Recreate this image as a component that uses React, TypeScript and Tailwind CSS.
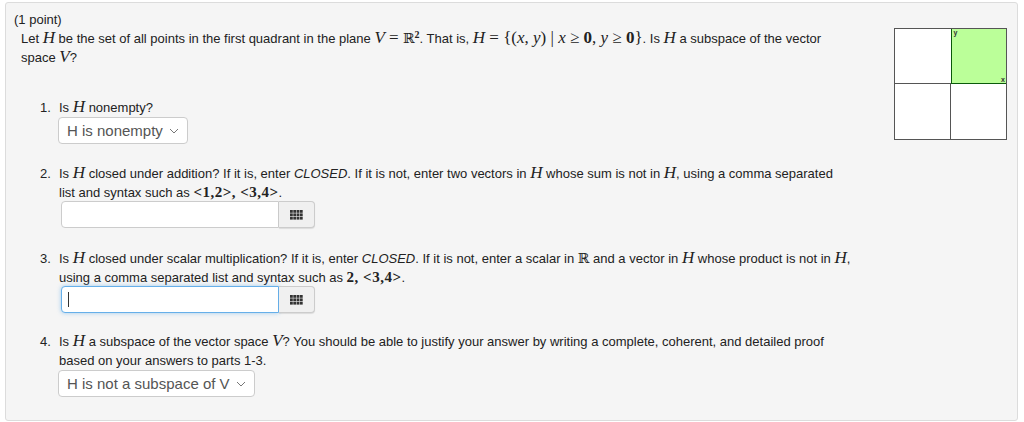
import React from "react";

const M = ({ children }: { children: React.ReactNode }) => (
  <span className="font-['Liberation_Serif',serif] italic text-[17px] leading-[0]">{children}</span>
);

const Op = ({ children }: { children: React.ReactNode }) => (
  <span className="font-['Liberation_Serif',serif] text-[17px] leading-[0]">{children}</span>
);

const R = () => <span className="font-['DejaVu_Serif',serif] text-[14px] leading-[0]">ℝ</span>;

const Code = ({ children }: { children: React.ReactNode }) => (
  <span className="font-['Liberation_Serif',serif] font-bold text-[15px] leading-[0] tracking-[0.5px]">{children}</span>
);

const Chevron = () => (
  <svg width="10" height="6" viewBox="0 0 10 6" className="ml-[6px] mt-[1px]">
    <path d="M1 1l4 4 4-4" fill="none" stroke="#777" strokeWidth="1" />
  </svg>
);

const Select = ({ label, width }: { label: string; width: string }) => (
  <div
    className={`${width} h-[27px] ml-[-1px] flex items-center px-[8px] bg-white border border-[#ccc] rounded-[4px] text-[15px] text-[#555]`}
  >
    <span>{label}</span>
    <Chevron />
  </div>
);

const GridIcon = () => (
  <svg width="13" height="10" viewBox="0 0 13 10">
    {[0, 1, 2].map((r) =>
      [0, 1, 2, 3].map((c) => (
        <rect key={`${r}-${c}`} x={c * 3.3} y={r * 3.4} width="2.8" height="2.8" fill="#333" />
      ))
    )}
  </svg>
);

const AnswerInput = ({ focused }: { focused?: boolean }) => (
  <div className="flex mt-[-1px] ml-[2px] h-[27px]">
    <div
      className={
        focused
          ? "w-[218px] h-full bg-white border border-[#66afe9] rounded-l-[4px] shadow-[0_0_4px_rgba(102,175,233,0.6)] flex items-center pl-[6px]"
          : "w-[218px] h-full bg-white border border-[#ccc] rounded-l-[4px]"
      }
    >
      {focused && <span className="w-px h-[15px] bg-[#333]" />}
    </div>
    <div className="w-[36px] h-full flex items-center justify-center bg-[#f0f0f0] border border-l-0 border-[#ccc] rounded-r-[4px] shadow-[0_1px_1px_rgba(0,0,0,0.1)]">
      <GridIcon />
    </div>
  </div>
);

const Figure = () => (
  <div className="w-[113px] h-[112px] border border-[#555] grid grid-cols-2 grid-rows-2 bg-white shrink-0">
    <div className="border-b border-[#555]" />
    <div className="relative bg-[#bbff99] border-l border-b border-[#0a5a0a]">
      <span className="absolute left-[2px] top-[0px] text-[7px] font-bold leading-none text-[#333]">y</span>
      <span className="absolute right-[1px] bottom-[0px] text-[7px] font-bold leading-none text-[#333]">x</span>
    </div>
    <div className="border-r border-[#555]" />
    <div />
  </div>
);

export default function App() {
  return (
    <div className="bg-white w-[1024px] h-[422px] pt-[2px] pl-[5px] font-['Liberation_Sans',Arial,sans-serif] text-[13px] leading-[19px] text-[#222]">
      <div className="w-[1013px] h-[419px] border border-[#dcdcdc] rounded-[3px] bg-[#f5f5f5] pl-[8px] pr-[10px] pt-[7px]">
        <div>(1 point)</div>
        <div className="flex">
          <div className="flex-1">
            <div className="pl-[7px]">
              <div className="whitespace-nowrap">
                Let <M>H</M> be the set of all points in the first quadrant in the plane <M>V</M>
                <Op> = </Op>
                <R />
                <sup className="font-['Liberation_Serif',serif] font-bold text-[10px] leading-[0]">2</sup>. That is,{" "}
                <M>H</M>
                <Op> = </Op>
                <Op>
                  {"{("}
                  <i>x</i>, <i>y</i>
                  {")"}
                </Op>
                <Op> | </Op>
                <M>x</M>
                <Op> ≥ </Op>
                <Op>
                  <b>0</b>, <i>y</i>
                </Op>
                <Op> ≥ </Op>
                <Op>
                  <b>0</b>
                  {"}"}
                </Op>
                . Is <M>H</M> a subspace of the vector
              </div>
              <div>
                space <M>V</M>?
              </div>
            </div>

            <ol className="mt-[31px] pl-[45px]">
              <li className="relative">
                <span className="absolute left-[-19px]">1.</span>
                <div>
                  Is <M>H</M> nonempty?
                </div>
                <Select label="H is nonempty" width="w-[130px]" />
              </li>

              <li className="relative mt-[20px]">
                <span className="absolute left-[-19px]">2.</span>
                <div className="whitespace-nowrap">
                  Is <M>H</M> closed under addition? If it is, enter <i>CLOSED</i>. If it is not, enter two vectors in{" "}
                  <M>H</M> whose sum is not in <M>H</M>, using a comma separated
                </div>
                <div>
                  list and syntax such as <Code>&lt;1,2&gt;, &lt;3,4&gt;</Code>.
                </div>
                <AnswerInput />
              </li>

              <li className="relative mt-[21px]">
                <span className="absolute left-[-19px]">3.</span>
                <div className="whitespace-nowrap">
                  Is <M>H</M> closed under scalar multiplication? If it is, enter <i>CLOSED</i>. If it is not, enter a
                  scalar in <R /> and a vector in <M>H</M> whose product is not in <M>H</M>,
                </div>
                <div>
                  using a comma separated list and syntax such as <Code>2, &lt;3,4&gt;</Code>.
                </div>
                <AnswerInput focused />
              </li>

              <li className="relative mt-[19px]">
                <span className="absolute left-[-19px]">4.</span>
                <div className="whitespace-nowrap">
                  Is <M>H</M> a subspace of the vector space <M>V</M>? You should be able to justify your answer by
                  writing a complete, coherent, and detailed proof
                </div>
                <div>based on your answers to parts 1-3.</div>
                <Select label="H is not a subspace of V" width="w-[197px]" />
              </li>
            </ol>
          </div>
          <div className="mt-[-1px]">
            <Figure />
          </div>
        </div>
      </div>
    </div>
  );
}
